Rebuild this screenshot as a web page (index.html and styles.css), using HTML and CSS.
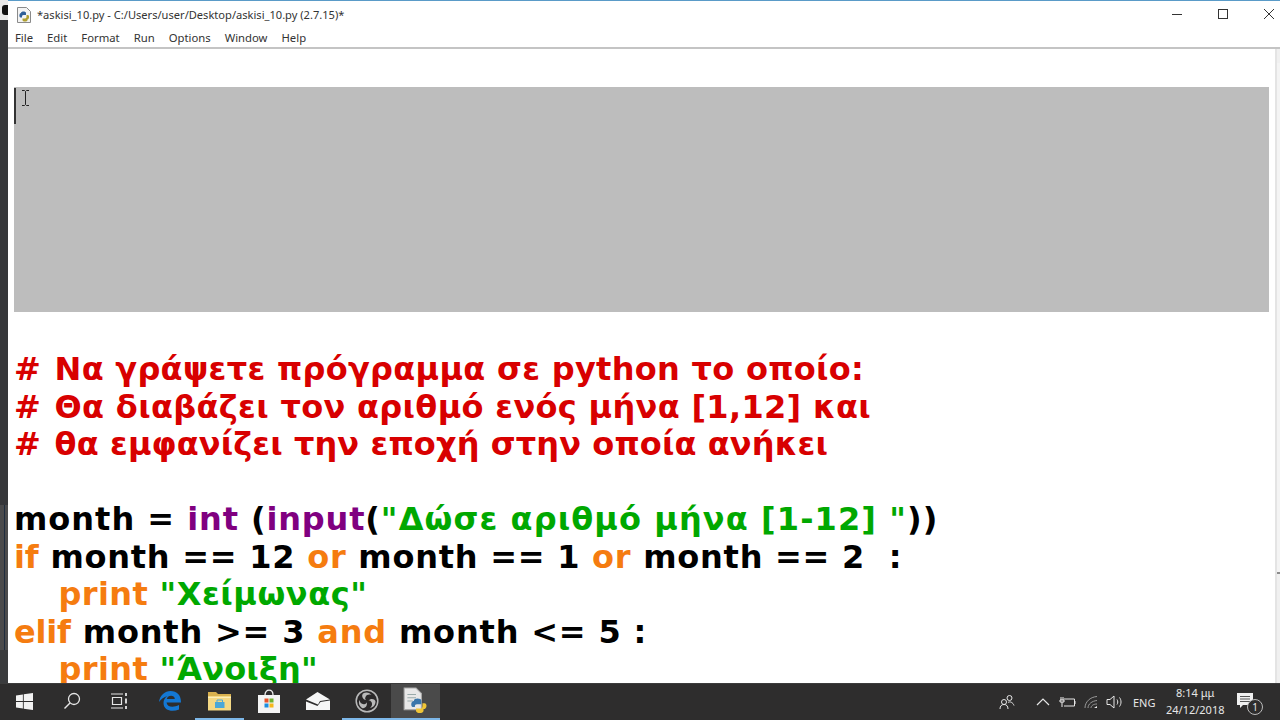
FILE: index.html
```html
<!DOCTYPE html>
<html lang="el">
<head>
<meta charset="utf-8">
<title>askisi_10.py</title>
<link rel="stylesheet" href="styles.css">
</head>
<body>
<div class="desktop">
  <div class="side-strip">
    <div class="strip-top"><div class="blob"></div></div>
    <div class="strip-dark"></div>
    <div class="strip-light"><div class="strip-line"></div></div>
    <div class="strip-end"></div>
  </div>
  <div class="window">
    <div class="accent-line"></div>
    <div class="titlebar">
      <svg class="app-icon" viewBox="0 0 16 16" width="16" height="16">
        <path d="M1.500.5h9l4 4v11h-13z" fill="#f4f4f4" stroke="#8a8a8a"/>
        <path d="M5 6c0-2 5-2 5 0v2H7.500C6 8 6 9 6 10.500H4.500C3 10.500 3 6 5 6z" fill="#2f5f98"/>
        <path d="M12 8c1.500 0 1.500 4.500-.5 4.500V13c0 2-5 2-5 0v-1.500H9c1.500 0 1.500-1 1.500-3.500z" fill="#b0a030"/>
      </svg>
      <span class="title-text">*askisi_10.py - C:/Users/user/Desktop/askisi_10.py (2.7.15)*</span>
      <div class="win-controls">
        <svg class="win-btn" viewBox="0 0 12 12" width="12" height="12"><path d="M1 6.500h10" stroke="#333" fill="none"/></svg>
        <svg class="win-btn" viewBox="0 0 12 12" width="12" height="12"><rect x="1.500" y="1.500" width="9" height="9" stroke="#333" fill="none"/></svg>
        <svg class="win-btn" viewBox="0 0 12 12" width="12" height="12"><path d="M1 1l10 10M11 1L1 11" stroke="#333" fill="none"/></svg>
      </div>
    </div>
    <nav class="menubar">
      <span>File</span><span>Edit</span><span>Format</span><span>Run</span><span>Options</span><span>Window</span><span>Help</span>
    </nav>
    <div class="editor-row">
      <div class="editor">
        <div class="selection"></div>
        <pre class="code"><span class="c l1"><span class="h"># </span>Να γράψετε πρόγραμμα σε python το οποίο:</span>
<span class="c l2"><span class="h"># </span>Θα διαβάζει τον αριθμό ενός μήνα [1,12] και</span>
<span class="c l3"><span class="h"># </span>θα εμφανίζει την εποχή στην οποία ανήκει</span>

<span class="l4">month = <span class="b">int</span> (<span class="b">input</span>(<span class="s">"Δώσε αριθμό μήνα [1-12] "</span>))</span>
<span class="l5"><span class="k kf">if</span> month == 12 <span class="k">or</span> month == 1 <span class="k">or</span> month == 2  :</span>
<span class="l6"><span class="ind">    </span><span class="k">print</span> <span class="s">"Χείμωνας"</span></span>
<span class="l7"><span class="k kf">elif</span> month &gt;= 3 <span class="k">and</span> month &lt;= 5 :</span>
<span class="l8"><span class="ind">    </span><span class="k">print</span> <span class="s">"Άνοιξη"</span></span></pre>
        <div class="caret"></div>
        <svg class="ibeam" viewBox="0 0 9 16" width="9" height="16"><path d="M1 .5h2.500L4.500 1.500 5.500.5H8M4.500 1.500v13M1 15.500h2.500l1-1 1 1H8" stroke="#222" fill="none"/></svg>
      </div>
      <div class="scrollbar">
        <div class="thumb"></div>
      </div>
    </div>
  </div>
</div>
<footer class="taskbar">
  <div class="task-left">
    <div class="task-icon narrow"><svg viewBox="0 0 18 18" width="17" height="17"><path d="M0 2.600l7.300-1v7H0zM8.200 1.400L18 0v8.600H8.200zM0 9.400h7.300v7L0 15.400zM8.200 9.400H18V18l-9.800-1.400z" fill="#f2f2f2"/></svg></div>
    <div class="task-icon narrow"><svg viewBox="0 0 18 18" width="18" height="18"><circle cx="11" cy="7" r="5.500" stroke="#e6e6e6" stroke-width="1.300" fill="none"/><path d="M7 11l-5.500 5.500" stroke="#e6e6e6" stroke-width="1.500"/></svg></div>
    <div class="task-icon narrow"><svg viewBox="0 0 18 16" width="18" height="16"><path d="M0 1h12M0 15h12M1.500 4.500h9v7h-9z" stroke="#e6e6e6" fill="none" stroke-width="1.200"/><path d="M15 0v3M15 5.500v5M15 13v3" stroke="#e6e6e6" stroke-width="1.800"/></svg></div>
    <div class="task-icon edge"><svg viewBox="0 0 22 20" width="22" height="20"><path d="M0 11C1 4 6 0 11.500 0 18 0 22 4 22 11.500H7.500c.5 4.500 6.500 5.500 12.500 2.500v4.500c-7 3-15.500 1-15.500-6.500 0-3 1.500-5.500 4-7C5 6 2 8 0 11zM7.800 8h8c0-4-7-4.500-8 0z" fill="#1478d4"/></svg></div>
    <div class="task-icon open"><svg viewBox="0 0 23 20" width="23" height="20"><path d="M0 1h8l2 2h13v3H0z" fill="#d9b14f"/><path d="M0 5h23v14.500H0z" fill="#f4d884"/><path d="M7 11h9.500v6H7z" fill="#4aa7d8"/><path d="M9 11V9h5.500v2" fill="none" stroke="#4aa7d8"/><path d="M0 6.500h23" stroke="#fdeeb8"/></svg></div>
    <div class="task-icon"><svg viewBox="0 0 24 24" width="24" height="24"><path d="M1 6h22v18H1z" fill="#f4f4f4"/><path d="M8 6c0-6.500 8-6.500 8 0" fill="none" stroke="#eee" stroke-width="1.300"/><path d="M7.500 9.500h4v4h-4z" fill="#e8542a"/><path d="M12.500 9.500h4v4h-4z" fill="#6eb22e"/><path d="M7.500 14.500h4v4h-4z" fill="#1c8fe0"/><path d="M12.500 14.500h4v4h-4z" fill="#f5b71a"/></svg></div>
    <div class="task-icon"><svg viewBox="0 0 24 18" width="24" height="18"><path d="M0 7.500L11.500 0 24 7.500l-10 1.500-2 3.500z" fill="#f6f6f6"/><path d="M0 9.500L11.500 14l3-4 9.500-1.500V18H0z" fill="#f6f6f6"/></svg></div>
    <div class="task-icon open"><svg viewBox="0 0 24 24" width="24" height="24"><circle cx="12" cy="12" r="10.800" fill="#2a2829" stroke="#b9b9b9" stroke-width="1.500"/><g fill="#b9b9b9"><path d="M8 4.500c3-2 7-1 8.500 1.500-2-1-5-.5-6 2-.5 1.500-.5 2 .5 3-3-.5-5-4-3-6.500z"/><path d="M8 4.500c3-2 7-1 8.500 1.500-2-1-5-.5-6 2-.5 1.500-.5 2 .5 3-3-.5-5-4-3-6.500z" transform="rotate(120 12 12)"/><path d="M8 4.500c3-2 7-1 8.500 1.500-2-1-5-.5-6 2-.5 1.500-.5 2 .5 3-3-.5-5-4-3-6.500z" transform="rotate(240 12 12)"/></g></svg></div>
    <div class="task-icon open active"><svg viewBox="0 0 24 26" width="26" height="28"><path d="M1 1h11l5 5v15H1z" fill="#e8e8e8" stroke="#aaa"/><path d="M4 7h8M4 10h8M4 13h5" stroke="#9aa"/><path d="M10 13c0-3 7-3 7 0v3h-4c-2 0-2 1-2 2.500H9c-2 0-2-5.500 1-5.500z" fill="#3a76ab"/><path d="M20 15c2.500 0 2.500 5.500-1 5.500V22c0 3-7 3-7 0v-2h4c2 0 2-1 2-5z" fill="#f0c537"/></svg></div>
  </div>
  <div class="task-right">
    <svg class="tray people" viewBox="0 0 16 16" width="16" height="16"><circle cx="10.500" cy="4" r="2.500" stroke="#e6e6e6" fill="none"/><circle cx="5" cy="8" r="2.500" stroke="#e6e6e6" fill="none"/><path d="M1 15c0-3 1.500-4.500 4-4.500S9 12 9 15M9 8.500c2-1.500 5 0 6 3" stroke="#e6e6e6" fill="none"/></svg>
    <svg class="tray chevron" viewBox="0 0 14 8" width="14" height="8"><path d="M1 7l6-6 6 6" stroke="#e6e6e6" fill="none" stroke-width="1.200"/></svg>
    <svg class="tray battery" viewBox="0 0 17 12" width="17" height="12"><path d="M5 3h10.500v7H5" stroke="#e6e6e6" fill="none"/><path d="M16 5v3" stroke="#e6e6e6"/><path d="M2 1v3M4 1v3M1 4h4v2H1zM3 6v5" stroke="#f0f0f0" fill="none"/></svg>
    <svg class="tray wifi" viewBox="0 0 14 14" width="14" height="14"><path d="M1 13C1 7 6 2 13 1.500M4 13c0-4 4-7 9-7.500M7 13c0-2 2-4 6-4" stroke="#999" fill="none"/><path d="M10 13h3v-2z" fill="#eee"/></svg>
    <svg class="tray speaker" viewBox="0 0 18 14" width="18" height="14"><path d="M1 4.500h3l4-3.500v12l-4-3.500H1z" stroke="#e6e6e6" fill="none"/><path d="M11 4.500c1 1.500 1 3.500 0 5M13.500 2.500c2 2.500 2 6.500 0 9" stroke="#e6e6e6" fill="none"/></svg>
    <span class="lang">ENG</span>
    <div class="clock"><span>8:14 μμ</span><span>24/12/2018</span></div>
    <div class="notif">
      <svg viewBox="0 0 18 16" width="18" height="16"><path d="M0 0h16v12H6l-3 3v-3H0z" fill="#f0f0f0"/><path d="M3 3.500h10M3 6h10M3 8.500h10" stroke="#555"/></svg>
      <span class="badge">1</span>
    </div>
  </div>
</footer>
</body>
</html>
```
FILE: styles.css
```css
* { box-sizing: border-box; }
html, body { margin: 0; padding: 0; width: 1280px; height: 720px; overflow: hidden; background: #2b2b2b; }
body { display: flex; flex-direction: column; font-family: "Noto Sans", "Liberation Sans", sans-serif; }

.desktop { flex: none; height: 683px; display: flex; }
.side-strip { flex: none; width: 8px; display: flex; flex-direction: column; background: #3a3b3d; }
.strip-top { flex: none; height: 20px; padding-top: 5px; background: #e8e8e8; }
.blob { width: 6px; height: 10px; margin-left: 2px; background: #111; border-radius: 3px 0 0 3px; }
.strip-dark { flex: none; height: 485px; background: #36373a; }
.strip-light { flex: none; height: 145px; padding-left: 4px; background: #4a4a4b; }
.strip-line { width: 1px; height: 100%; background: #1f2c3d; }
.strip-end { flex: 1; background: #3a3b3d; }

.window { flex: 1; min-width: 0; display: flex; flex-direction: column; background: #fff; }
.accent-line { flex: none; height: 1px; background: #5a9bc8; }

.titlebar { flex: none; height: 26px; display: flex; align-items: center; padding-left: 8px; background: #fff; }
.app-icon { flex: none; margin-right: 5px; margin-top: 1px; }
.title-text { font-size: 11.100px; color: #333; white-space: nowrap; margin-top: 1px; }
.win-controls { margin-left: auto; display: flex; align-items: center; gap: 34px; padding-right: 5px; }
.win-btn { display: block; }

.menubar { flex: none; height: 22px; display: flex; align-items: center; gap: 14px; padding-left: 7px; background: #fff; border-bottom: 2px solid #c4c4c4; font-size: 11.300px; color: #333; }

.editor-row { flex: 1; min-height: 0; display: flex; }
.editor { position: relative; flex: 1; min-width: 0; overflow: hidden; padding-top: 38px; }
.selection { width: 1255px; height: 225px; margin-left: 6px; background: #bdbdbd; }
.code { margin: 39px 0 0 6px; font-family: "DejaVu Sans", Verdana, sans-serif; font-weight: 700; font-size: 32px; line-height: 37.500px; color: #000; white-space: pre; }
.c { color: #d80000; }
.b { color: #800080; }
.s { color: #00a800; }
.k { color: #f57c10; }
.h { letter-spacing: 1.300px; }
.l1 { letter-spacing: .29px; }
.l2 { letter-spacing: .32px; }
.l3 { letter-spacing: .1px; }
.l4 { letter-spacing: 1px; }
.l4 .b { letter-spacing: .8px; }
.l4 .s { letter-spacing: 1.100px; }
.l5 { letter-spacing: .75px; }
.l6, .l8 { letter-spacing: .35px; }
.l6 .s { letter-spacing: .55px; }
.l8 .s { letter-spacing: .2px; }
.l7 { letter-spacing: .82px; }
.kf { letter-spacing: -.2px; }
.ind { letter-spacing: 0; }
.caret { position: absolute; left: 6px; top: 39px; width: 2px; height: 36px; background: #333; }
.ibeam { position: absolute; left: 13px; top: 41px; }

.scrollbar { flex: none; width: 5px; background: #f0f0f0; border-left: 2px solid #e4e4e4; margin-left: 6px; position: relative; }
.thumb { position: absolute; left: 0; right: 0; top: 14px; height: 511px; background: #f4f4f4; border-bottom: 2px solid #8c8c8c; }

.taskbar { flex: none; height: 37px; display: flex; justify-content: space-between; background: #2e2d2d; border-top: 1px solid #3c3c3c; }
.task-left { display: flex; }
.task-icon { width: 49px; height: 36px; display: flex; align-items: center; justify-content: center; border-bottom: 2px solid transparent; }
.task-icon.narrow { width: 48px; }
.task-icon.edge { width: 51px; }
.task-icon.open { border-bottom-color: #7db7e8; }
.task-icon.active { background: #4a4a4a; }
.task-right { display: flex; align-items: center; color: #e6e6e6; padding-right: 17px; }
.tray { flex: none; display: block; }
.people { margin-right: 21px; }
.chevron { margin-right: 9px; }
.battery { margin-right: 8px; }
.wifi { margin-right: 8px; }
.speaker { margin-right: 9px; }
.lang { font-size: 11px; margin-right: 10.500px; }
.clock { display: flex; flex-direction: column; align-items: center; font-size: 11px; line-height: 17px; margin-right: 12.500px; padding-bottom: 3px; }
.notif { position: relative; width: 26px; height: 26px; padding-top: 3px; }
.badge { position: absolute; right: 0; bottom: 0; width: 16px; height: 16px; border-radius: 50%; border: 1px solid #bbb; background: #2e2d2d; font-size: 10px; line-height: 14px; text-align: center; }
```
